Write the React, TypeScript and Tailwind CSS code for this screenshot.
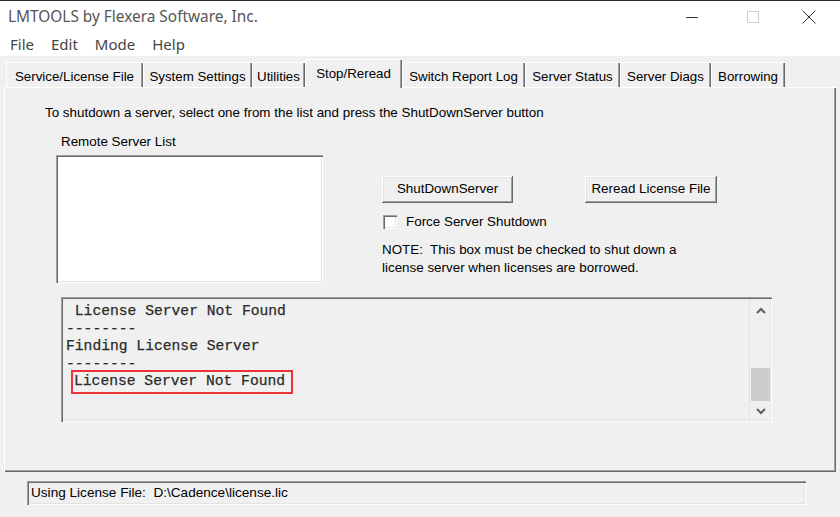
import React from 'react';

const tabs = [
  { label: 'Service/License File', w: 'w-[137px]' },
  { label: 'System Settings', w: 'w-[109px]' },
  { label: 'Utilities', w: 'w-[53px]' },
  { label: 'Stop/Reread', w: 'w-[97px]', active: true },
  { label: 'Switch Report Log', w: 'w-[123px]' },
  { label: 'Server Status', w: 'w-[95px]' },
  { label: 'Server Diags', w: 'w-[91px]' },
  { label: 'Borrowing', w: 'w-[74px]' },
];

const raised =
  'shadow-[inset_-1px_-1px_0_#696969,inset_1px_1px_0_#ffffff,inset_-2px_-2px_0_#a0a0a0,inset_2px_2px_0_#e3e3e3]';
const sunken =
  'shadow-[inset_1px_1px_0_#a0a0a0,inset_2px_2px_0_#696969,inset_-1px_-1px_0_#ffffff,inset_-2px_-2px_0_#e3e3e3]';

function WindowControls() {
  return (
    <div className="ml-auto flex h-full items-center">
      <div className="flex w-[58px] justify-center pr-[6px]">
        <div className="h-px w-[12px] bg-[#333]" />
      </div>
      <div className="flex w-[58px] justify-center">
        <div className="h-[12px] w-[12px] border border-[#cfcfcf]" />
      </div>
      <div className="flex w-[58px] justify-center pr-[4px]">
        <svg width="14" height="14" viewBox="0 0 14 14">
          <path d="M0.5 0.5 L13.5 13.5 M13.5 0.5 L0.5 13.5" stroke="#333" strokeWidth="1" />
        </svg>
      </div>
    </div>
  );
}

function Chevron({ up }: { up?: boolean }) {
  return (
    <svg width="10" height="7" viewBox="0 0 10 7">
      <path
        d={up ? 'M1 6 L5 2 L9 6' : 'M1 1 L5 5 L9 1'}
        fill="none"
        stroke="#606060"
        strokeWidth="2"
      />
    </svg>
  );
}

export default function App() {
  return (
    <div className="h-[517px] w-[840px] overflow-hidden border-t border-[#2b2b2b] bg-[#f0f0f0] font-['Liberation_Sans',Arial,sans-serif] text-black">
      {/* title bar */}
      <div className="flex h-[32px] items-center bg-white pl-[8px] font-['Noto_Sans',sans-serif] text-[15.4px] text-[#555]">
        <span className="-mt-[1px]">LMTOOLS by Flexera Software, Inc.</span>
        <WindowControls />
      </div>

      {/* menu bar */}
      <div className="flex h-[23px] items-center gap-[17px] bg-white pl-[10px] font-['Noto_Sans',sans-serif] text-[15px] text-[#444]">
        <span>File</span>
        <span>Edit</span>
        <span>Mode</span>
        <span>Help</span>
      </div>

      {/* tabs */}
      <div className="flex h-[31px] items-end pl-[6px] text-[13.3px]">
        {tabs.map((t) =>
          t.active ? (
            <div
              key={t.label}
              className={`${t.w} relative z-10 -mb-[1px] flex h-[29px] items-start justify-center bg-[#f0f0f0] pt-[5px] shadow-[inset_1px_1px_0_#ffffff,inset_-1px_0_0_#696969,inset_-2px_0_0_#a0a0a0]`}
            >
              {t.label}
            </div>
          ) : (
            <div
              key={t.label}
              className={`${t.w} flex h-[25px] items-start justify-center bg-[#f0f0f0] pt-[5px] shadow-[inset_1px_1px_0_#ffffff,inset_-1px_0_0_#696969,inset_-2px_0_0_#a0a0a0]`}
            >
              {t.label}
            </div>
          ),
        )}
      </div>

      {/* tab panel */}
      <div className="ml-[4px] h-[385px] w-[832px] shadow-[inset_1px_1px_0_#ffffff,inset_-1px_-1px_0_#696969,inset_-2px_-2px_0_#a0a0a0] text-[13.4px]">
        <div className="pl-[41px] pt-[18px] leading-[16px]">
          To shutdown a server, select one from the list and press the ShutDownServer button
        </div>

        <div className="mt-[13px] flex pl-[52px]">
          <div className="flex flex-col">
            <div className="pl-[5px] leading-[16px]">Remote Server List</div>
            <div className={`mt-[5px] h-[128px] w-[267px] bg-white ${sunken}`} />
          </div>

          <div className="ml-[59px] mt-[42px] flex flex-col">
            <div className="flex">
              <button className={`h-[27px] w-[131px] bg-[#f0f0f0] ${raised}`}>ShutDownServer</button>
              <button className={`ml-[72px] h-[27px] w-[132px] bg-[#f0f0f0] ${raised}`}>
                Reread License File
              </button>
            </div>
            <div className="mt-[11px] flex h-[16px] items-center pl-[1px]">
              <div className={`h-[14px] w-[14px] bg-white ${sunken}`} />
              <span className="ml-[9px]">Force Server Shutdown</span>
            </div>
            <div className="mt-[11px] leading-[17.5px]">
              NOTE:&nbsp; This box must be checked to shut down a
              <br />
              license server when licenses are borrowed.
            </div>
          </div>
        </div>

        {/* log */}
        <div className={`ml-[57px] mt-[14px] flex h-[125px] w-[711px] bg-[#f0f0f0] p-[2px] pr-[1px] pb-[1px] ${sunken}`}>
          <div className="flex-1 whitespace-pre pl-[3px] pt-[4px] font-['Liberation_Mono','Courier_New',monospace] text-[14.67px] leading-[17.6px] text-[#2a2a2a] [-webkit-text-stroke:0.25px_#2a2a2a]">
            <div> License Server Not Found</div>
            <div>--------</div>
            <div>Finding License Server</div>
            <div>--------</div>
            <div className="-mt-[3px]">
              <span className="ml-[5px] inline-block border-2 border-[#ee3338] py-[1px] pl-[1px] pr-[6px]">
                License Server Not Found
              </span>
            </div>
          </div>
          <div className="flex w-[22px] flex-col border-l border-[#e2e2e2]">
            <div className="flex h-[22px] items-center justify-center">
              <Chevron up />
            </div>
            <div className="flex flex-1 flex-col justify-end px-[1px]">
              <div className="h-[33px] bg-[#cdcdcd]" />
            </div>
            <div className="flex h-[20px] items-center justify-center">
              <Chevron />
            </div>
          </div>
        </div>
      </div>

      {/* status bar */}
      <div className={`ml-[27px] mt-[9px] flex h-[24px] w-[779px] items-center pl-[4px] text-[13.6px] ${sunken}`}>
        Using License File:&nbsp; D:\Cadence\license.lic
      </div>
    </div>
  );
}
